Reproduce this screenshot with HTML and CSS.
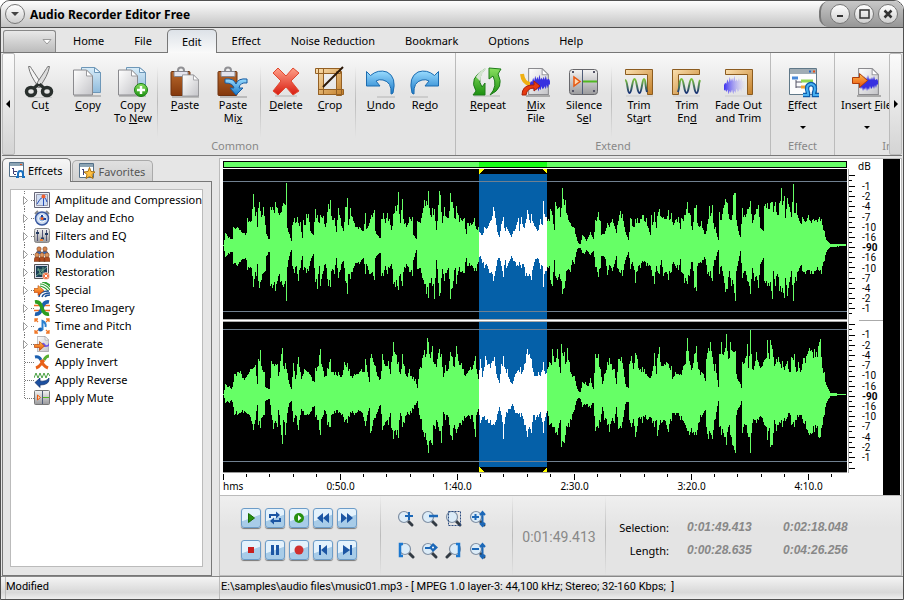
FILE: index.html
```html
<!DOCTYPE html>
<html lang="en">
<head>
    <meta charset="UTF-8">
    <meta name="viewport" content="width=device-width, initial-scale=1.0">
    <title>Audio Recorder Editor Free</title>
    <link rel="stylesheet" href="styles.css">
</head>

<body>
    <svg class="defs" aria-hidden="true">
        <defs>
            <linearGradient id="gPage" x1="0" y1="0" x2="1" y2="1"><stop offset="0" stop-color="#fff"/><stop offset="1" stop-color="#c4c4c8"/></linearGradient>
            <linearGradient id="gSky" x1="0" y1="0" x2="0" y2="1"><stop offset="0" stop-color="#d8ecf8"/><stop offset="1" stop-color="#8fbbdc"/></linearGradient>
            <linearGradient id="gBlue" x1="0" y1="0" x2="0" y2="1"><stop offset="0" stop-color="#9adcff"/><stop offset="1" stop-color="#1878c8"/></linearGradient>
            <linearGradient id="gWood" x1="0" y1="0" x2="1" y2="1"><stop offset="0" stop-color="#fbe0b0"/><stop offset="1" stop-color="#c47f28"/></linearGradient>
            <linearGradient id="gClip" x1="0" y1="0" x2="0" y2="1"><stop offset="0" stop-color="#b8682c"/><stop offset="1" stop-color="#84380c"/></linearGradient>
            <linearGradient id="gRed" x1="0" y1="0" x2="0" y2="1"><stop offset="0" stop-color="#ffa088"/><stop offset="1" stop-color="#d81c10"/></linearGradient>
            <linearGradient id="gGreen" x1="0" y1="0" x2="0" y2="1"><stop offset="0" stop-color="#8ae060"/><stop offset="1" stop-color="#1c9010"/></linearGradient>
            <linearGradient id="gSteel" x1="0" y1="0" x2="0" y2="1"><stop offset="0" stop-color="#f4f4f4"/><stop offset="1" stop-color="#9a9a9c"/></linearGradient>
            <linearGradient id="gWave" x1="0" y1="0" x2="0" y2="1"><stop offset="0" stop-color="#7cc43c"/><stop offset="1" stop-color="#183078"/></linearGradient>
            <linearGradient id="gFade" x1="0" y1="0" x2="1" y2="0"><stop offset="0" stop-color="#3c30f0"/><stop offset="1" stop-color="#b8b0ff" stop-opacity="0"/></linearGradient>
            <linearGradient id="gOrange" x1="0" y1="0" x2="0" y2="1"><stop offset="0" stop-color="#ffc050"/><stop offset="1" stop-color="#e84c08"/></linearGradient>
        </defs>

        <!-- shared pieces -->
        <symbol id="p-sheet" viewBox="0 0 20 26"><path d="M.5.5h13l6 6v19H.5z" fill="url(#gPage)" stroke="#8a8a8e"/><path d="M13.500.500v6h6z" fill="#fff" stroke="#9a9a9e"/></symbol>
        <symbol id="p-clip" viewBox="0 0 24 30"><rect x="1" y="5" width="19" height="24" rx="1" fill="url(#gClip)" stroke="#6e3210"/><circle cx="11" cy="4" r="3" fill="none" stroke="#909094" stroke-width="2"/><rect x="4" y="5" width="14" height="5" rx="1" fill="#e4e4ee" stroke="#84848e"/></symbol>
        <symbol id="p-noise" viewBox="0 0 20 16"><path d="M0 8l1-2 1 1 1-4 1 3 1-5 1 4 1-3 1 3 1-5 1 5 1-2 1 2 1-3 1 3 1-4 1 4 2-1 1 2v4l-1-1-1 4-1-3-1 4-1-3-1 2-1 1-1-3-1 4-1-2-1 3-1-4-1 3-1-2-1 3-1-4-1 2-1-2-1 1z"/></symbol>

        <!-- ribbon icons -->
        <symbol id="i-cut" viewBox="0 0 32 32">
            <path d="M4 31.500h24" stroke="#ccc"/>
            <path d="M4.500.500q2-1 3 2L19 20l-4 1.500Q6 10 4.500.500z" fill="#f4f4f4" stroke="#777"/><path d="M25.500.500q-2-1-3 2L11 20l4 1.500Q24 10 25.500.500z" fill="#dcdcdc" stroke="#777"/>
            <ellipse cx="7" cy="25.500" rx="4.500" ry="4" fill="none" stroke="#2a302e" stroke-width="3.500"/><ellipse cx="23" cy="25.500" rx="4.500" ry="4" fill="none" stroke="#2a302e" stroke-width="3.500"/>
            <path d="M10 22l5-4 5 4" fill="none" stroke="#2a302e" stroke-width="3"/><circle cx="15" cy="17" r="1" fill="#fff"/>
        </symbol>
        <symbol id="i-copy" viewBox="0 0 32 32"><path d="M2 30h27" stroke="#bbb" stroke-width="2"/><path d="M9.500 1.500h13l6 5v20h-19z" fill="url(#gSky)" stroke="#6d97b8"/><path d="M22.500 1.500v5h6z" fill="#eef8ff" stroke="#6d97b8"/><use href="#p-sheet" x="1" y="3" width="20" height="27"/></symbol>
        <symbol id="i-copynew" viewBox="0 0 32 32"><use href="#i-copy" width="32" height="32"/><circle cx="24" cy="24" r="6.500" fill="url(#gGreen)" stroke="#178010"/><path d="M24 20v8M20 24h8" stroke="#fff" stroke-width="2.500"/></symbol>
        <symbol id="i-paste" viewBox="0 0 32 32"><path d="M3 31h27" stroke="#bbb" stroke-width="2"/><use href="#p-clip" x="1" y="0" width="24" height="31"/><use href="#p-sheet" x="13" y="8" width="17" height="23"/></symbol>
        <symbol id="i-pastemix" viewBox="0 0 32 32"><path d="M3 31h27" stroke="#bbb" stroke-width="2"/><use href="#p-clip" x="0" y="0" width="24" height="31"/><path d="M8 13q9-1 11 5 2-6 11-5v4q-7-1-8 5h4l-7 7-6-7h4q-1-5-9-5z" fill="url(#gBlue)" stroke="#155aa0"/></symbol>
        <symbol id="i-delete" viewBox="0 0 32 32"><path d="M5 30h22" stroke="#ccc" stroke-width="2"/><path d="M3 7l5-5 8 8 7-8 6 5-8 8 8 10-6 4-7-8-8 8-5-4 8-10z" fill="url(#gRed)" stroke="#e04830"/></symbol>
        <symbol id="i-crop" viewBox="0 0 32 32"><path d="M1.500 2.500h25v5h-25z M4.500 2.500h5v26h-5z M4.500 23.500h25v5h-25z M22.500 5.500h5v24h-5z" fill="url(#gWood)" stroke="#946024"/><path d="M9 21L29 1" stroke="#2c1808" stroke-width="2"/></symbol>
        <symbol id="i-undo" viewBox="0 0 32 32"><path d="M12 31h18" stroke="#ccc" stroke-width="2"/><path d="M1.500 5.500l4 4Q13 3 22 6q10 5 6 21-1 1-2 1 1-12-8-14-4-1-7 1l4 5H1.500z" fill="url(#gBlue)" stroke="#1c6cb0"/></symbol>
        <symbol id="i-redo" viewBox="0 0 32 32"><use href="#i-undo" width="32" height="32" transform="matrix(-1 0 0 1 31 0)"/></symbol>
        <symbol id="i-repeat" viewBox="0 0 32 32"><path d="M2 30h26" stroke="#ccc" stroke-width="2"/><path d="M13 3Q-4 12 4 25l-3 4h12V17l-3 4Q4 12 13 3z" fill="url(#gGreen)" stroke="#1e7c1a"/><path d="M18 29q15-7 8-21l3-5-12-1v11l4-3q5 10-3 19z" fill="url(#gGreen)" stroke="#1e7c1a"/><path d="M14 2Q7 5 4 11l4 4q1-7 6-12z" fill="#d4e4d0"/></symbol>
        <symbol id="i-mixfile" viewBox="0 0 32 32"><path d="M6 30h24" stroke="#aaa" stroke-width="2"/><use href="#p-sheet" x="8" y="2" width="21" height="27"/><use href="#p-noise" x="10" y="8" width="21" height="18" fill="#3830e0"/><path d="M2 8q1 9 8 10" fill="none" stroke="#f0b010" stroke-width="4"/><path d="M2 29q0-9 9-10h3v-4l6 5-6 5v-3q-7 0-8 7z" fill="#e83a10" stroke="#a82008"/></symbol>
        <symbol id="i-silence" viewBox="0 0 32 32"><rect x="1.500" y="3.500" width="28" height="25" rx="3" fill="url(#gSteel)" stroke="#68686c"/><path d="M14.500 4v24" stroke="#4e5c78"/><path d="M15 15.500h14" stroke="#50b820" stroke-width="2"/><path d="M6 11v9l6-4.500z" fill="#ffd8b0" stroke="#e85810" stroke-width="1.500"/><path d="M4 6h2M4 25h2M25 6h2M25 25h2" stroke="#556" stroke-width="2"/></symbol>
        <symbol id="i-trimstart" viewBox="0 0 32 32"><path d="M3 30h27" stroke="#ccc"/><path d="M2.500 3.500h27v25h-5v-20h-22z" fill="url(#gWood)" stroke="#8c5c20"/><path d="M2 14c3 0 2 13 4.500 13S9 13 11.500 13 14 27 16.500 27 19 13 21 13s1 8 3 13" fill="none" stroke="url(#gWave)" stroke-width="2"/></symbol>
        <symbol id="i-trimend" viewBox="0 0 32 32"><path d="M2 30h27" stroke="#ccc"/><path d="M1.500 3.500h27v5h-21v20h-6z" fill="url(#gWood)" stroke="#8c5c20"/><path d="M7 26c2-5 1-13 3.500-13S13 27 15.500 27 18 13 20.500 13 23 27 25.500 27 27 18 29 14" fill="none" stroke="url(#gWave)" stroke-width="2"/></symbol>
        <symbol id="i-fade" viewBox="0 0 32 32"><path d="M2 30h27" stroke="#ccc"/><path d="M2.500 3.500h27v25h-5v-20h-22z" fill="url(#gWood)" stroke="#8c5c20"/><use href="#p-noise" x="1" y="9" width="23" height="20" fill="url(#gFade)"/></symbol>
        <symbol id="i-effect" viewBox="0 0 32 32"><path d="M2.500 2.500h27v26h-27z" fill="#fdfdfd" stroke="#607888"/><path d="M3 3h26v5H3z" fill="#a0acb4"/><path d="M22 5.500h2" stroke="#2868c8" stroke-width="2"/><path d="M26 5.500h2" stroke="#e85018" stroke-width="2"/><path d="M5 12h6" stroke="#4888d8" stroke-width="3"/><path d="M9 14v8M9 16h6M9 21h6" stroke="#556" fill="none"/><path d="M14 15h12" stroke="#90d850" stroke-width="3"/><path d="M14 21h5" stroke="#f0a030" stroke-width="3"/><path d="M16 29h5v-2q-3-8 3-9 6 1 3 9v2h5" fill="none" stroke="#0c5cac" stroke-width="4.500"/><path d="M16 29h5v-2q-3-8 3-9 6 1 3 9v2h5" fill="none" stroke="#48b0f0" stroke-width="2"/></symbol>
        <symbol id="i-insert" viewBox="0 0 32 32"><path d="M6 30h24" stroke="#aaa" stroke-width="2"/><use href="#p-sheet" x="7" y="2" width="21" height="27"/><use href="#p-noise" x="8" y="8" width="20" height="18" fill="#3830e0"/><path d="M1.500 11.500h7v-4l8 7-8 7v-4h-7z" fill="url(#gOrange)" stroke="#b03c08"/></symbol>

        <!-- 16px icons -->
        <symbol id="s-fx" viewBox="0 0 16 16"><path d="M.5.5h14v14H.5z" fill="#fff" stroke="#547088"/><path d="M1 1h13v3H1z" fill="#8ca4b4"/><path d="M11 2.500h2" stroke="#e85018"/><path d="M3 6.500h2M4.500 7v5M5 9.500h3M5 12.500h2" stroke="#447" fill="none"/><path d="M7 15h2v-3q0-3 2.500-3t2.500 3v3h2" fill="none" stroke="#1870c0" stroke-width="2"/></symbol>
        <symbol id="s-fav" viewBox="0 0 16 16"><path d="M.5.5h14v14H.5z" fill="#fff" stroke="#547088"/><path d="M1 1h13v3H1z" fill="#8ca4b4"/><path d="M3 6.500h2M4.500 7v5M5 9.500h3" stroke="#447" fill="none"/><path d="M10.500 4.500l1.500 4 4 .5-3 2.500 1 4-3.500-2-3.500 2 1-4-3-2.500 4-.5z" fill="#ffc040" stroke="#a87010"/></symbol>
        <symbol id="s-amp" viewBox="0 0 16 16"><path d="M.5.5h15v15H.5z" fill="#eef2fa" stroke="#667"/><path d="M2.500 2.500h11v11h-11z" fill="#cfdcf2" stroke="#99a"/><path d="M3 12q3-6 6-7 3 0 4 5" fill="none" stroke="#2850b8"/><path d="M9.500 5v9" stroke="#2850b8"/><circle cx="9.500" cy="4.500" r="2" fill="#f06030"/></symbol>
        <symbol id="s-delay" viewBox="0 0 16 16"><path d="M1 4l3-3M15 4l-3-3" stroke="#888" stroke-width="2"/><circle cx="8" cy="8.500" r="6.500" fill="#c8d8ee" stroke="#3858a0" stroke-width="1.500"/><circle cx="8" cy="8.500" r="3.500" fill="#90b4e0" stroke="#fff"/><path d="M8 5v4h4" fill="none" stroke="#1840a0" stroke-width="2"/><circle cx="8" cy="8.500" r="1.500" fill="#f06020"/></symbol>
        <symbol id="s-filter" viewBox="0 0 16 16"><rect x=".5" y=".5" width="15" height="14" rx="2" fill="url(#gSteel)" stroke="#888"/><path d="M3.500 2v11M8.500 2v11M12.500 2v11" stroke="#557"/><path d="M2 5h3M7 10.500h3M11 6h3" stroke="#223a60" stroke-width="2"/><path d="M6 12h3" stroke="#f08030" stroke-width="2"/></symbol>
        <symbol id="s-mod" viewBox="0 0 16 16"><g stroke="#6c3414" stroke-width=".5"><path d="M2 8q0-3 3-3t3 3M8 8q0-3 3-3t3 3" fill="#3c6cb8"/><circle cx="5" cy="3" r="2.200" fill="#d88850"/><circle cx="11" cy="3" r="2.200" fill="#d88850"/><path d="M0 15.500q0-5 3-5t3 5zM5 15.500q0-5 3-5t3 5zM10 15.500q0-5 3-5t3 5z" fill="#b04c20"/><circle cx="3" cy="9" r="2.200" fill="#e09860"/><circle cx="8" cy="9" r="2.200" fill="#e09860"/><circle cx="13" cy="9" r="2.200" fill="#e09860"/></g></symbol>
        <symbol id="s-rest" viewBox="0 0 16 16"><path d="M.5.5h14v14H.5z" fill="#dde" stroke="#555"/><path d="M2 2h11v11H2z" fill="#1c4058"/><path d="M2 12L13 3M3 6h6M5 10h6M4 4l3 7M9 3v8" stroke="#78b890" stroke-width=".8"/><circle cx="12" cy="12" r="3.500" fill="#f07040" stroke="#fff" stroke-width=".5"/><path d="M10.500 10.500l3 3M13.500 10.500l-3 3" stroke="#fff"/></symbol>
        <symbol id="s-spec" viewBox="0 0 16 16"><path d="M6 2q6 0 10 6M8 0q5 1 8 5M6 4q5 1 8 5M11 0l5 3" fill="none" stroke="#30a030" stroke-width="1.200"/><path d="M5 15q0-6 10-6M8 15q1-4 8-4M11 15q1-2 5-2" fill="none" stroke="#1c5098" stroke-width="1.400"/><path d="M0 6.500h4v-3l6 5-6 5v-3H0z" fill="url(#gOrange)" stroke="#b84408" stroke-width=".6"/></symbol>
        <symbol id="s-stereo" viewBox="0 0 16 16"><path d="M0 5.500h16M0 10.500h16" stroke="#f07028" stroke-width="1.500"/><path d="M1 14q5 1 7-6t7-6" fill="none" stroke="#1c60b0" stroke-width="3.500"/><path d="M1 2q5-1 7 6t7 6" fill="none" stroke="#2c9c20" stroke-width="3.500"/></symbol>
        <symbol id="s-time" viewBox="0 0 16 16"><path d="M1 4V1h3M12 1h3v3M1 12v3h3M12 15h3v-3M1 1l3 3M15 1l-3 3M1 15l3-3M15 15l-3-3" fill="none" stroke="#f07828" stroke-width="1.300"/><ellipse cx="6.500" cy="11.500" rx="2.500" ry="2" fill="#1860b0"/><path d="M8.500 12V3q4 2 3 6" fill="none" stroke="#2c80d0" stroke-width="2"/></symbol>
        <symbol id="s-gen" viewBox="0 0 16 16"><use href="#p-sheet" x="3" y="0" width="12" height="16"/><path d="M7 9q2-4 4-1t4-1v3q-3 2-8 0z" fill="#7058e8"/><path d="M.5 8.500h5v-3l5 4.500-5 4.500v-3h-5z" fill="url(#gOrange)" stroke="#b84408" stroke-width=".7"/></symbol>
        <symbol id="s-inv" viewBox="0 0 16 16"><path d="M1 3q4-1 6 3" fill="none" stroke="#1c60b0" stroke-width="3"/><path d="M10 6q2-4 5-4" fill="none" stroke="#58b030" stroke-width="3"/><path d="M2 14q3-1 5-4t3-4M7 6q2 6 7 8" fill="none" stroke="#e86018" stroke-width="3"/></symbol>
        <symbol id="s-rev" viewBox="0 0 16 16"><path d="M0 6l2-5 2 5 2-5 2 5 2-5 2 5 2-5 2 3" fill="none" stroke="#48a040"/><path d="M1 10.500L6 6v3q6 1 9-3 1 7-9 7v2.500z" fill="#1c50a0" stroke="#0c2c68" stroke-width=".7"/></symbol>
        <symbol id="s-mute" viewBox="0 0 16 16"><rect x=".5" y=".5" width="15" height="14" rx="1" fill="url(#gSteel)" stroke="#777"/><path d="M8.500 1v13" stroke="#4e5c78"/><path d="M9 7.500h6" stroke="#50b820"/><path d="M3.500 5v5l3-2.500z" fill="#ffd8b0" stroke="#e85810"/></symbol>
        <symbol id="s-tip" viewBox="0 0 12 18"><path d="M1.500 5.500v8l4-4z" fill="#fff" stroke="#999"/><path d="M2.500 0v4M2.500 15v3M9 9.500h3" stroke="#777" stroke-dasharray="1 1"/></symbol>
        <symbol id="s-leaf" viewBox="0 0 12 18"><path d="M2.500 0v18M3 9.500h9" stroke="#777" stroke-dasharray="1 1"/></symbol>
        <symbol id="s-last" viewBox="0 0 12 18"><path d="M2.500 0v9M3 9.500h9" stroke="#777" stroke-dasharray="1 1"/></symbol>

        <!-- transport -->
        <symbol id="t-play" viewBox="0 0 18 18"><path d="M6.500 4.500l6 4.500-6 4.500z" fill="#289010" stroke="#1c6c08"/></symbol>
        <symbol id="t-loop" viewBox="0 0 18 18"><path d="M4 9V6h7M14 9v3H7" fill="none" stroke="#1c56a4" stroke-width="2"/><path d="M10 2.500v7L14 6zM8 8.500v7L4 12z" fill="#1c56a4"/></symbol>
        <symbol id="t-once" viewBox="0 0 18 18"><circle cx="9" cy="9" r="5" fill="#289010"/><path d="M8 6l3.500 3L8 12z" fill="#fff"/></symbol>
        <symbol id="t-rew" viewBox="0 0 18 18"><path d="M9 4v10L3 9zM15 4v10L9 9z" fill="#1c56a4"/></symbol>
        <symbol id="t-fwd" viewBox="0 0 18 18"><path d="M3 4v10l6-5zM9 4v10l6-5z" fill="#1c56a4"/></symbol>
        <symbol id="t-stop" viewBox="0 0 18 18"><path d="M6 6h6v6H6z" fill="#c82020"/></symbol>
        <symbol id="t-pause" viewBox="0 0 18 18"><path d="M5 4h3v10H5zM10 4h3v10h-3z" fill="#1c56a4"/></symbol>
        <symbol id="t-rec" viewBox="0 0 18 18"><circle cx="9" cy="9" r="4.500" fill="#d03030"/></symbol>
        <symbol id="t-first" viewBox="0 0 18 18"><path d="M5 4h2v10H5zM13 4v10L7 9z" fill="#1c56a4"/></symbol>
        <symbol id="t-last" viewBox="0 0 18 18"><path d="M12 4h2v10h-2zM5 4v10l7-5z" fill="#1c56a4"/></symbol>

        <!-- zoom -->
        <symbol id="z-lens" viewBox="0 0 18 18"><path d="M11 11l4 4" stroke="#333b44" stroke-width="3" stroke-linecap="round"/><circle cx="7" cy="7" r="5.500" fill="#dcecf8" stroke="#8090a4" stroke-width="1.200"/></symbol>
        <symbol id="z-in" viewBox="0 0 18 18"><use href="#z-lens" width="18" height="18"/><path d="M12 2v8M8 6h8" stroke="#1c68b8" stroke-width="2"/></symbol>
        <symbol id="z-out" viewBox="0 0 18 18"><use href="#z-lens" width="18" height="18"/><path d="M8 6h9" stroke="#1c68b8" stroke-width="2.500"/></symbol>
        <symbol id="z-sel" viewBox="0 0 18 18"><use href="#z-lens" width="18" height="18"/><path d="M3.500 1.500h12v14h-12z" fill="none" stroke="#2c4c80" stroke-dasharray="2 1"/></symbol>
        <symbol id="z-vin" viewBox="0 0 18 18"><use href="#z-lens" width="18" height="18"/><path d="M3 7h7M6.500 4v6M13.500 3v11M11 5l2.500-3L16 5M11 13l2.500 3 2.500-3" fill="none" stroke="#1c68b8" stroke-width="2"/></symbol>
        <symbol id="z-vout" viewBox="0 0 18 18"><use href="#z-lens" width="18" height="18"/><path d="M3 7h7M13.500 3v11M11 5l2.500-3L16 5M11 13l2.500 3 2.500-3" fill="none" stroke="#1c68b8" stroke-width="2"/></symbol>
        <symbol id="z-left" viewBox="0 0 18 18"><use href="#z-lens" x="1" width="18" height="18"/><path d="M6 2H3v12h3" fill="none" stroke="#1c78d0" stroke-width="2.500"/></symbol>
        <symbol id="z-right" viewBox="0 0 18 18"><use href="#z-lens" width="18" height="18" transform="matrix(-1 0 0 1 17 0)"/><path d="M11 2h3v12h-3" fill="none" stroke="#1c78d0" stroke-width="2.500"/></symbol>
        <symbol id="z-full" viewBox="0 0 18 18"><use href="#z-lens" width="18" height="18"/><path d="M4 6h5" stroke="#1c68b8" stroke-width="2"/><path d="M12 1l5 4.500-5 4.500-4-4.500z" fill="#1c68b8"/><circle cx="12" cy="5.500" r="1" fill="#fff"/></symbol>
    </svg>

    <div class="window">
        <header class="title-bar">
            <button type="button" class="round" aria-label="Quick access"><svg viewBox="0 0 18 18"><path d="M5 7h8l-4 4z" fill="#444"/></svg></button>
            <h1>Audio Recorder Editor Free</h1>
            <div class="window-buttons">
                <button type="button" class="round" aria-label="Minimize"><svg viewBox="0 0 18 18"><path d="M6 11h6" stroke="#333" stroke-width="2"/></svg></button>
                <button type="button" class="round" aria-label="Maximize"><svg viewBox="0 0 18 18"><path d="M5 5h9v8H5z" fill="none" stroke="#333" stroke-width="1.500"/></svg></button>
                <button type="button" class="round" aria-label="Close"><svg viewBox="0 0 18 18"><path d="M5.500 5.500l7 7M12.500 5.500l-7 7" stroke="#333" stroke-width="2.500"/></svg></button>
            </div>
        </header>

        <nav class="menu">
            <button type="button" class="app-button" aria-label="Application menu"><svg width="10" height="6" viewBox="0 0 10 6"><path d="M1 .5h8L5 5z" fill="#fff" stroke="#999"/></svg></button>
            <button type="button">Home</button>
            <button type="button">File</button>
            <button type="button" class="current">Edit</button>
            <button type="button">Effect</button>
            <button type="button">Noise Reduction</button>
            <button type="button">Bookmark</button>
            <button type="button">Options</button>
            <button type="button">Help</button>
        </nav>

        <div class="ribbon">
            <button type="button" class="scroll" aria-label="Scroll left"><svg width="5" height="8" viewBox="0 0 5 8"><path d="M4 0v8L0 4z"/></svg></button>
            <div class="groups">
                <section class="group common">
                    <div class="tools">
                        <button type="button" class="tool wide"><svg><use href="#i-cut"/></svg><span>Cu<u>t</u></span></button>
                        <button type="button" class="tool wide"><svg><use href="#i-copy"/></svg><span><u>C</u>opy</span></button>
                        <button type="button" class="tool narrow"><svg><use href="#i-copynew"/></svg><span>Copy<br>To <u>N</u>ew</span></button>
                        <i class="rule"></i>
                        <button type="button" class="tool wide"><svg><use href="#i-paste"/></svg><span><u>P</u>aste</span></button>
                        <button type="button" class="tool wide"><svg><use href="#i-pastemix"/></svg><span>Paste<br>Mi<u>x</u></span></button>
                        <i class="rule"></i>
                        <button type="button" class="tool"><svg><use href="#i-delete"/></svg><span><u>D</u>elete</span></button>
                        <button type="button" class="tool"><svg><use href="#i-crop"/></svg><span><u>C</u>rop</span></button>
                        <i class="rule"></i>
                        <button type="button" class="tool"><svg><use href="#i-undo"/></svg><span><u>U</u>ndo</span></button>
                        <button type="button" class="tool"><svg><use href="#i-redo"/></svg><span>Re<u>d</u>o</span></button>
                    </div>
                    <h2>Common</h2>
                </section>
                <section class="group extend">
                    <div class="tools">
                        <button type="button" class="tool wide"><svg><use href="#i-repeat"/></svg><span><u>R</u>epeat</span></button>
                        <button type="button" class="tool wide"><svg><use href="#i-mixfile"/></svg><span><u>M</u>ix<br>File</span></button>
                        <button type="button" class="tool wide"><svg><use href="#i-silence"/></svg><span>Silence<br>S<u>e</u>l</span></button>
                        <i class="rule"></i>
                        <button type="button" class="tool wide"><svg><use href="#i-trimstart"/></svg><span>Trim<br>St<u>a</u>rt</span></button>
                        <button type="button" class="tool wide"><svg><use href="#i-trimend"/></svg><span>Trim<br>En<u>d</u></span></button>
                        <button type="button" class="tool wider"><svg><use href="#i-fade"/></svg><span>Fade Out<br>and Trim</span></button>
                    </div>
                    <h2>Extend</h2>
                </section>
                <section class="group effect">
                    <div class="tools">
                        <button type="button" class="tool wider"><svg><use href="#i-effect"/></svg><span><u>E</u>ffect</span><b class="drop"></b></button>
                    </div>
                    <h2>Effect</h2>
                </section>
                <section class="group insert">
                    <div class="tools">
                        <button type="button" class="tool wider"><svg><use href="#i-insert"/></svg><span>Insert <u>F</u>ile</span><b class="drop"></b></button>
                    </div>
                    <h2>Insert</h2>
                </section>
            </div>
            <button type="button" class="scroll" aria-label="Scroll right"><svg width="5" height="8" viewBox="0 0 5 8"><path d="M1 0v8l4-4z"/></svg></button>
        </div>

        <div class="workspace">
            <aside class="side">
                <div class="side-tabs">
                    <button type="button" class="current"><svg><use href="#s-fx"/></svg>Effcets</button>
                    <button type="button"><svg><use href="#s-fav"/></svg>Favorites</button>
                </div>
                <div class="side-body">
                    <ul class="tree">
                        <li><svg class="tip"><use href="#s-tip"/></svg><svg class="small"><use href="#s-amp"/></svg>Amplitude and Compression</li>
                        <li><svg class="tip"><use href="#s-tip"/></svg><svg class="small"><use href="#s-delay"/></svg>Delay and Echo</li>
                        <li><svg class="tip"><use href="#s-tip"/></svg><svg class="small"><use href="#s-filter"/></svg>Filters and EQ</li>
                        <li><svg class="tip"><use href="#s-tip"/></svg><svg class="small"><use href="#s-mod"/></svg>Modulation</li>
                        <li><svg class="tip"><use href="#s-tip"/></svg><svg class="small"><use href="#s-rest"/></svg>Restoration</li>
                        <li><svg class="tip"><use href="#s-tip"/></svg><svg class="small"><use href="#s-spec"/></svg>Special</li>
                        <li><svg class="tip"><use href="#s-tip"/></svg><svg class="small"><use href="#s-stereo"/></svg>Stereo Imagery</li>
                        <li><svg class="tip"><use href="#s-tip"/></svg><svg class="small"><use href="#s-time"/></svg>Time and Pitch</li>
                        <li><svg class="tip"><use href="#s-tip"/></svg><svg class="small"><use href="#s-gen"/></svg>Generate</li>
                        <li><svg class="tip"><use href="#s-leaf"/></svg><svg class="small"><use href="#s-inv"/></svg>Apply Invert</li>
                        <li><svg class="tip"><use href="#s-leaf"/></svg><svg class="small"><use href="#s-rev"/></svg>Apply Reverse</li>
                        <li><svg class="tip"><use href="#s-last"/></svg><svg class="small"><use href="#s-mute"/></svg>Apply Mute</li>
                    </ul>
                </div>
            </aside>

            <main class="main">
                <div class="editor">
                    <div class="overview"><span></span><span class="selected"></span><span></span></div>
                    <div class="unit">dB</div>
                    <svg class="wave" viewBox="0 0 624 303" preserveAspectRatio="none" role="img" aria-label="Waveform">
                        <defs><clipPath id="selection"><rect x="256" y="0" width="68" height="303"/></clipPath></defs>
                        <rect width="624" height="303" fill="#000"/>
                        <rect x="256" y="5" width="68" height="293" fill="#0560a8"/>
                        <path d="M256 0h5l-5 5zM324 0h-5l5 5zM256 303h5l-5-5zM324 303h-5l5-5z" fill="#ff0"/>
                        <path id="wave" fill="#66ff66"/>
                        <path id="waveSelected" fill="#fff" clip-path="url(#selection)"/>
                        <path d="M0 12.500h624M0 142.500h624M0 160.500h624M0 292.500h624" stroke="#708090"/>
                        <path d="M0 151.500h624" stroke="#aaa" stroke-width="3"/>
                        <path d="M0 151.500h624" stroke="#fff"/>
                    </svg>
                    <div class="levels">
                        <svg class="ticks" viewBox="0 0 8 303" preserveAspectRatio="none"><path id="ticks" stroke="#000"/></svg>
                        <ol><li>-1</li><li>-2</li><li>-4</li><li>-7</li><li>-10</li><li>-16</li><li><b>-90</b></li><li>-16</li><li>-10</li><li>-7</li><li>-4</li><li>-2</li><li>-1</li></ol>
                        <ol><li>-1</li><li>-2</li><li>-4</li><li>-7</li><li>-10</li><li>-16</li><li><b>-90</b></li><li>-16</li><li>-10</li><li>-7</li><li>-4</li><li>-2</li><li>-1</li></ol>
                    </div>
                    <div class="timeline">
                        <svg viewBox="0 0 660 7" preserveAspectRatio="none"><path id="marks" stroke="#000"/></svg>
                        <ol><li>hms</li><li>0:50.0</li><li>1:40.0</li><li>2:30.0</li><li>3:20.0</li><li>4:10.0</li></ol>
                    </div>
                    <div class="meter"></div>
                </div>

                <div class="controls">
                    <div class="transport">
                        <button type="button" aria-label="Play"><svg><use href="#t-play"/></svg></button>
                        <button type="button" aria-label="Loop"><svg><use href="#t-loop"/></svg></button>
                        <button type="button" aria-label="Play once"><svg><use href="#t-once"/></svg></button>
                        <button type="button" aria-label="Rewind"><svg><use href="#t-rew"/></svg></button>
                        <button type="button" aria-label="Forward"><svg><use href="#t-fwd"/></svg></button>
                        <button type="button" aria-label="Stop"><svg><use href="#t-stop"/></svg></button>
                        <button type="button" aria-label="Pause"><svg><use href="#t-pause"/></svg></button>
                        <button type="button" aria-label="Record"><svg><use href="#t-rec"/></svg></button>
                        <button type="button" aria-label="Go to start"><svg><use href="#t-first"/></svg></button>
                        <button type="button" aria-label="Go to end"><svg><use href="#t-last"/></svg></button>
                    </div>
                    <div class="zooms">
                        <button type="button" aria-label="Zoom in"><svg><use href="#z-in"/></svg></button>
                        <button type="button" aria-label="Zoom out"><svg><use href="#z-out"/></svg></button>
                        <button type="button" aria-label="Zoom selection"><svg><use href="#z-sel"/></svg></button>
                        <button type="button" aria-label="Zoom in vertically"><svg><use href="#z-vin"/></svg></button>
                        <button type="button" aria-label="Zoom to left edge"><svg><use href="#z-left"/></svg></button>
                        <button type="button" aria-label="Zoom full"><svg><use href="#z-full"/></svg></button>
                        <button type="button" aria-label="Zoom to right edge"><svg><use href="#z-right"/></svg></button>
                        <button type="button" aria-label="Zoom out vertically"><svg><use href="#z-vout"/></svg></button>
                    </div>
                    <div class="clock">0:01:49.413</div>
                    <dl class="range">
                        <dt>Selection:</dt><dd>0:01:49.413</dd><dd>0:02:18.048</dd>
                        <dt>Length:</dt><dd>0:00:28.635</dd><dd>0:04:26.256</dd>
                    </dl>
                </div>
            </main>
        </div>

        <footer class="status">
            <span class="state">Modified</span>
            <span class="file">E:\samples\audio files\music01.mp3 - [ MPEG 1.0 layer-3: 44,100 kHz; Stereo; 32-160 Kbps;&nbsp; ]</span>
        </footer>
    </div>

    <script src="wave.js"></script>
</body>
</html>
```

FILE: styles.css
```css
* {
    box-sizing: border-box;
}
body {
    margin: 0;
    font-family: "Noto Sans", "Open Sans", sans-serif;
    font-size: 11px;
    color: #000;
}
button {
    margin: 0;
    padding: 0;
    border: 0;
    background: none;
    font: inherit;
    color: inherit;
}
svg {
    display: block;
    flex: none;
}
h1, h2, ul, ol, dl, dd {
    margin: 0;
    padding: 0;
    list-style: none;
}
.defs {
    position: absolute;
    width: 0;
    height: 0;
}
.window {
    display: flex;
    flex-direction: column;
    min-height: 100vh;
    border: 1px solid #505050;
    border-radius: 10px 10px 0 0;
    background: #e6e6e6;
    overflow: hidden;
}

/* title bar */
.title-bar {
    display: flex;
    align-items: center;
    height: 27px;
    padding-left: 4px;
    border-bottom: 1px solid #505050;
    background: linear-gradient(#fdfdfd, #c4c4c4);
}
.title-bar h1 {
    flex: 1;
    margin-left: 5px;
    font-size: 12px;
    font-weight: 700;
}
.round {
    width: 20px;
    height: 20px;
    border: 1px solid #777;
    border-radius: 50%;
    background: linear-gradient(#fff, #cfcfcf);
}
.round svg {
    width: 18px;
    height: 18px;
}
.window-buttons {
    display: flex;
    align-items: center;
    gap: 4px;
    height: 26px;
    padding: 0 5px 0 9px;
    border-left: 2px solid #777;
    border-radius: 10px 0 0 10px;
    background: linear-gradient(#c8c8c8, #969696);
}

/* menu */
.menu {
    display: flex;
    align-items: flex-end;
    height: 25px;
    padding-left: 2px;
    border-bottom: 1px solid #777;
}
.menu button {
    height: 22px;
    padding: 0 15px;
    line-height: 22px;
}
.menu .app-button {
    display: flex;
    align-items: center;
    justify-content: flex-end;
    width: 53px;
    margin-right: 2px;
    padding: 0 3px;
    border: 1px solid #888;
    border-bottom: 0;
    border-radius: 3px 3px 0 0;
    background: linear-gradient(#e8e8e8, #bcbcbc);
}
.menu .current {
    height: 24px;
    margin-bottom: -1px;
    padding: 0 14px;
    border: 1px solid #777;
    border-bottom: 0;
    border-radius: 5px 5px 0 0;
    background: linear-gradient(#dde2e8, #fafafa);
    line-height: 20px;
}

/* ribbon */
.ribbon {
    display: flex;
    height: 103px;
    margin: 0 1px;
    border-bottom: 1px solid #777;
    background: linear-gradient(#f8f8f8, #e4e4e4 40%);
}
.scroll {
    display: flex;
    flex: none;
    align-items: center;
    justify-content: center;
    width: 13px;
    border: 1px solid #bbb;
    border-radius: 2px;
    background: linear-gradient(#fbfbfb, #d4d4d4);
}
.groups {
    display: flex;
    flex: 1;
    min-width: 0;
    overflow: hidden;
}
.group {
    display: flex;
    flex: none;
    flex-direction: column;
    border-right: 1px solid #bbb;
}
.common {
    width: 441px;
}
.common .tools {
    padding-left: 1px;
}
.extend {
    width: 315px;
}
.extend .tools {
    padding-left: 8px;
}
.effect {
    width: 64px;
}
.insert {
    width: 126px;
}
.tools {
    display: flex;
    flex: 1;
    padding-top: 13px;
}
.tool {
    display: flex;
    flex: none;
    flex-direction: column;
    align-items: center;
    width: 44px;
    line-height: 13px;
    white-space: nowrap;
}
.tool svg {
    width: 32px;
    height: 32px;
}
.tool.narrow {
    width: 42px;
}
.tool.wide {
    width: 48px;
}
.tool.wider {
    width: 55px;
}
.effect .tool,
.insert .tool {
    width: 63px;
}
.drop {
    margin-top: 15px;
    border: 3px solid transparent;
    border-top-color: #000;
    border-bottom: 0;
}
.rule {
    width: 1px;
    height: 72px;
    margin: 0 3px;
    background: linear-gradient(transparent, #bbb, transparent);
}
.group h2 {
    height: 17px;
    font-size: 11px;
    font-weight: 400;
    line-height: 16px;
    text-align: center;
    color: #888;
}

/* effects panel */
.workspace {
    display: flex;
    flex: 1;
    margin: 0 1px;
}
.side {
    display: flex;
    flex: none;
    flex-direction: column;
    width: 210px;
    margin-right: 7px;
    padding-top: 2px;
}
.side-tabs {
    display: flex;
    align-items: flex-end;
    gap: 1px;
}
.side-tabs button {
    display: flex;
    align-items: center;
    gap: 3px;
    height: 21px;
    padding: 0 7px 0 6px;
    border: 1px solid #aaa;
    border-bottom: 0;
    border-radius: 5px 5px 0 0;
    background: linear-gradient(#e0e0e0, #d0d0d0);
    color: #555;
}
.side-tabs .current {
    z-index: 1;
    height: 24px;
    margin-bottom: -1px;
    padding: 0 8px 1px 6px;
    border-color: #777;
    background: linear-gradient(#f6f6f6, #e6e6e6);
    color: #000;
}
.side-tabs svg,
.small {
    width: 16px;
    height: 16px;
}
.side-body {
    display: flex;
    flex: 1;
    padding: 7px 8px 8px 7px;
    border: 1px solid #777;
}
.tree {
    flex: 1;
    padding: 1px 0 0 11px;
    border: 1px solid #bbb;
    background: #fff;
}
.tree li {
    display: flex;
    align-items: center;
    height: 18px;
    line-height: 18px;
    white-space: nowrap;
}
.tip {
    width: 12px;
    height: 18px;
}
.small {
    margin-right: 5px;
}

/* waveform */
.main {
    display: flex;
    flex: 1;
    flex-direction: column;
    min-width: 0;
    padding-top: 2px;
}
.editor {
    display: grid;
    flex: 1;
    grid-template-columns: 1fr 36px 17px;
    grid-template-rows: 8px 1fr 22px;
    padding: 2px 1px 0 3px;
    border: 1px solid #bbb;
    background: #fff;
}
.overview {
    display: grid;
    grid-template-columns: 256fr 68fr 300fr;
    height: 7px;
    border: 1px solid #000;
    background: #66ff66;
}
.selected {
    background: #18ff18;
}
.unit {
    padding-left: 11px;
    font-size: 10px;
    line-height: 10px;
}
.wave {
    width: 100%;
    height: 100%;
    border-bottom: 1px solid #999;
    shape-rendering: crispEdges;
}
.levels {
    display: grid;
    grid-template-columns: 10px 1fr;
    grid-template-rows: 151fr 152fr;
    margin-left: 1px;
    border-left: 1px solid #aaa;
}
.ticks {
    grid-row: 1 / 3;
    width: 8px;
    height: 100%;
    shape-rendering: crispEdges;
}
.levels ol {
    display: flex;
    grid-column: 2;
    flex-direction: column;
    justify-content: space-between;
    padding: 13px 0 6px 3px;
    font-family: Roboto, sans-serif;
    font-size: 10px;
    line-height: 10px;
}
.levels ol + ol {
    padding: 9px 0 10px 3px;
    border-top: 1px solid #aaa;
}
.meter {
    grid-column: 3;
    grid-row: 1 / 4;
    margin-top: -2px;
    background: #000;
}
.timeline {
    grid-column: 1 / 3;
}
.timeline svg {
    width: 100%;
    height: 7px;
    shape-rendering: crispEdges;
}
.timeline ol {
    display: grid;
    grid-template-columns: 59fr repeat(5, 117fr) 16fr;
    font-size: 10px;
    line-height: 13px;
    text-align: center;
}
.timeline li:first-child {
    text-align: left;
}

/* bottom controls */
.controls {
    display: flex;
    height: 80px;
    border: 1px solid #bbb;
    border-top: 0;
    background: linear-gradient(#efefef, #e4e4e4 40%);
}
.transport {
    display: grid;
    grid-template-columns: repeat(5, 20px);
    align-content: center;
    gap: 12px 4px;
    padding: 0 23px 4px 21px;
}
.transport button {
    height: 20px;
    border: 1px solid #6c9cc8;
    border-radius: 3px;
    background: linear-gradient(160deg, #e4f2fc 48%, #a8cce8 52%);
    box-shadow: 0 1px 1px #777;
}
.transport svg {
    width: 18px;
    height: 18px;
}
.zooms {
    display: grid;
    grid-template-columns: repeat(4, 18px);
    align-content: center;
    gap: 14px 6px;
    padding: 0 25px 2px 16px;
}
.zooms svg {
    width: 18px;
    height: 18px;
}
.zooms,
.clock,
.range {
    border-left: 1px solid;
    border-image: linear-gradient(transparent, #bbb, transparent) 1;
}
.clock {
    display: flex;
    align-items: center;
    justify-content: center;
    width: 93px;
    padding-top: 2px;
    font-family: Roboto, sans-serif;
    font-size: 14px;
    color: #888;
}
.range {
    display: grid;
    grid-template-columns: 63px 96px 96px;
    grid-auto-rows: 23px;
    align-content: center;
    padding-top: 7px;
    line-height: 23px;
}
.range dt {
    text-align: right;
}
.range dd {
    padding-left: 18px;
    font-family: "Liberation Sans", sans-serif;
    font-size: 12px;
    font-weight: 700;
    font-style: italic;
    color: #888;
}

/* status bar */
.status {
    display: flex;
    height: 23px;
    border-top: 1px solid #888;
    background: linear-gradient(#f4f4f4, #d8d8d8 70%, #eee);
    font-family: Roboto, sans-serif;
    line-height: 20px;
}
.state {
    width: 214px;
    margin-left: 4px;
    border-left: 1px solid #bbb;
}
.file {
    padding-left: 1px;
    border-left: 1px solid #bbb;
}
```

FILE: wave.js
```js
// Peak tables: position, peak above, peak below.
// Positions are in thirds of a pixel, counted from the block's start.
const channels = [
    {
        middle: 76,
        blocks: [
            [-24, `24 0 0,31 12 11,36 9 9,42 8 8,52 6 6,55 18 18,66 18 20,75 15 16,84 12 13,94 12 14,97 27 24,104 24 22,110 24 22,115 51 41,118 38 33,124 33 30,127 18 18,131 37 35,134 43 42,139 28 34,146 38 27,150 20 25,153 11 10,162 6 6,166 38 40,172 38 42,177 32 36,181 43 45,186 37 35,192 30 28,196 32 36,206 42 41,211 40 35,214 62 55,217 17 21,224 11 10,229 4 4,233 20 20,238 27 27,243 23 20,247 28 28,251 22 35,256 23 22,262 7 10,266 25 24,270 20 22,275 31 27,280 31 25,287 14 15,296 10 8,301 36 36,307 30 43,312 22 20,316 30 40,325 29 25,332 18 18,341 41 40,345 45 41,350 29 25,357 27 28,363 13 12,370 37 32,377 27 24,385 14 15,391 38 35,397 47 48,400 20 28,406 37 33,412 28 26,424 18 17,434 18 18,445 14 12,451 32 28,455 16 18,462 22 28,470 30 27,479 35 34,482 14 12,495 7 7,499 26 30,505 32 30,511 22 20,518 32 28,524 26 22,529 15 18,535 31 38,541 39 41,547 40 40,551 53 44,555 22 28,562 46 40,566 26 26,578 20 20,583 28 26,592 28 30,596 10 14,604 6 4,608 24 23,616 22 22,622 32 32,628 45 38,634 44 48,641 54 52,645 30 32`],
            [621, `2 30 37,8 37 40,13 36 53,20 15 14,27 54 50,31 50 47,38 22 23,43 38 35,50 28 27,55 27 22,61 52 53,66 43 42,75 26 22,79 39 38,85 30 25,95 25 26,103 27 27,108 11 12,113 22 20,127 21 20,132 27 25,140 16 25,146 18 16,150 12 10,157 10 17,163 18 22,170 16 18,178 22 27,190 38 35,194 34 30,200 20 20,205 10 12,208 8 12,213 21 20,220 28 31,225 14 14,230 18 22,243 8 10,250 14 15,258 20 20,264 27 20,268 14 16,274 28 22,280 18 18,286 22 30,292 35 30,300 22 30,304 31 34,310 22 20,316 18 13,325 15 13,330 26 23,336 20 20,341 44 41,345 28 25,350 28 25,357 24 20,362 36 34,367 30 40,372 15 14,376 43 30,382 36 34,388 38 28,392 28 33,397 57 48,402 40 42,406 45 35,413 30 24,420 22 26,427 18 14,433 17 18,440 8 6,445 2 2,452 1 2,457 10 7,462 8 8,470 4 4,480 13 9,490 6 5,497 25 21,506 33 31,510 24 22,515 10 10,525 14 13,532 22 29,540 22 20,548 26 25,558 12 10,562 20 22,570 34 27,577 31 30,585 13 14,595 5 6,600 27 23,605 26 18,610 18 20,617 26 37,622 27 25,632 26 22,638 30 15,650 27 20,655 17 20`],
            [1281, `2 10 20,4 30 24,8 20 30,13 33 38,18 17 20,22 29 25,28 36 28,33 28 14,40 28 30,45 26 26,54 35 34,60 26 27,64 32 26,70 20 16,76 25 20,85 28 24,90 16 13,95 27 26,103 30 37,112 43 38,117 32 30,122 30 23,128 15 16,133 37 42,139 40 45,143 22 20,148 18 17,153 24 17,158 17 14,166 11 13,171 21 28,178 39 30,183 32 32,187 40 35,190 22 20,197 18 14,204 5 4,208 33 28,214 25 20,219 37 30,226 46 46,232 42 43,237 26 25,243 25 40,248 30 34,251 50 38,256 52 55,260 25 25,265 14 15,272 8 5,277 37 32,281 28 27,284 30 25,292 36 35,301 44 48,306 22 22,314 30 35,320 36 30,326 40 42,330 17 18,340 14 12,344 39 35,351 42 40,357 36 40,362 42 36,367 43 53,370 33 25,376 43 40,382 30 28,388 42 45,394 57 46,398 40 42,402 49 52,407 27 32,412 47 50,418 38 36,424 28 25,430 61 55,434 32 37,438 42 35,444 27 25,450 22 20,458 28 25,466 23 28,475 30 24,482 24 28,490 26 28,498 25 24,507 28 25,514 26 28,518 20 20,522 14 15,527 8 9,532 4 4,540 1 1,590 1 0`]
        ]
    },
    {
        middle: 225,
        blocks: [
            [-24, `24 0 0,31 10 8,36 7 6,42 8 8,50 5 5,55 12 12,58 20 20,66 22 20,75 23 18,85 16 18,93 17 18,105 25 22,115 26 35,122 29 25,127 10 10,131 35 30,137 44 33,141 24 22,147 22 20,152 7 6,163 5 4,168 33 20,174 30 34,180 30 26,187 30 32,190 18 15,197 33 30,202 46 49,206 28 25,212 31 40,217 21 18,224 10 8,230 5 6,235 31 27,242 15 20,249 37 35,255 22 20,260 15 14,268 25 20,280 22 20,290 17 16,298 12 11,302 26 22,308 27 25,317 45 40,320 30 24,325 23 20,332 18 16,337 26 30,345 35 32,350 22 20,360 22 18,370 22 18,380 17 20,388 32 27,398 31 28,402 25 22,410 18 18,418 20 20,433 22 16,440 25 17,447 22 26,451 35 31,456 22 20,462 12 13,465 36 38,470 40 36,475 32 25,482 28 23,488 18 17,495 15 10,502 40 35,507 30 30,515 28 26,520 33 30,527 20 18,530 32 33,535 52 44,540 40 35,544 39 40,550 32 43,555 20 18,562 40 32,568 28 28,575 18 20,582 25 20,588 18 18,594 17 14,600 15 10,606 6 6,612 25 20,617 27 24,622 36 35,628 44 42,633 40 45,638 56 50,641 52 58,647 36 45,651 48 50,655 32 30,662 30 34,668 35 27,673 45 36,680 40 48,686 17 17,692 29 25,700 25 22,706 42 40,712 37 45,718 27 30,725 48 38,730 33 32,738 31 30,745 25 26,752 18 23,760 23 20,766 27 24,772 25 20,780 38 42,785 25 20,790 15 14,797 35 28,802 17 22,811 38 25,820 30 28,830 31 30,838 37 30,844 20 25,852 11 12,860 30 20,866 38 44,870 25 22,878 25 18,885 12 14,892 10 9,900 20 18,908 23 18,915 27 22,920 20 18,927 30 30,933 40 36,938 45 42,944 40 32,950 35 38,955 22 20,962 18 25,970 22 22,977 18 17,984 32 38,990 20 22,996 25 16,1003 32 30,1010 29 28,1013 45 32,1020 32 38,1027 45 40`],
            [1011, `0 21 25,5 50 52,9 38 47,13 42 48,17 30 40,22 46 32,28 32 32,33 20 25,42 18 15,50 8 6,56 3 3,62 2 4,66 12 12,75 12 10,85 8 12,92 16 13,100 5 8,106 40 36,114 40 33,120 25 27,126 10 12,132 20 25,141 32 30,149 36 37,155 30 26,163 25 28,168 10 12,175 35 34,185 37 33,190 25 22,195 10 9,205 6 7,209 30 25,214 38 32,220 25 24,227 41 42,232 35 31,238 24 22,247 27 28,254 25 22,262 18 25,270 16 22,277 23 28,283 41 32,288 20 25,293 36 41,298 47 30,304 28 28,312 30 25,320 32 30,326 30 37,334 28 26,338 15 18,346 22 20,354 20 18,362 20 25,370 28 26,376 30 30,382 56 36,388 33 40,396 26 38,402 40 40,408 48 40,412 32 35,418 24 27,425 22 22,430 20 18,436 13 15,440 35 32,446 46 44,451 52 38,457 37 44,462 23 25,467 30 24,474 7 6,479 40 32,484 52 40,489 39 38,494 42 42,500 60 50,505 35 32,512 52 40,518 43 50,526 43 58,530 20 20,540 10 10,544 6 6,547 32 38,556 36 30,562 50 38,566 26 42,571 65 58,576 25 28,583 28 25,589 42 28,595 32 25,604 27 22,612 34 30,618 36 32,622 54 45,628 35 33,631 54 52,637 45 50,642 28 25,649 35 36,655 37 30,662 30 28,668 33 32,676 28 26,683 33 22,690 22 20,695 37 30,702 40 32,708 22 25,715 32 22,720 22 20,730 36 28,740 38 34,748 46 40,756 42 38,762 45 37,768 42 33,775 48 42,782 55 42,788 26 30,792 22 20,797 12 12,803 7 6,812 1 1,860 0 0`]
        ]
    }
];

function readPeaks(blocks) {
    return blocks.flatMap(([start, text]) => text.split(',').map(row => {
        const [x, up, down] = row.split(' ').map(Number);
        return { x: Math.floor((x + start) / 3), up, down };
    }));
}

// fixed seed, so the fine detail is always the same
let seed = 7;
function random() {
    seed = (seed * 16807) % 2147483647;
    return seed / 2147483647;
}

function drawChannel(channel) {
    const peaks = readPeaks(channel.blocks);
    let path = '';
    for (let i = 0; i < peaks.length - 1; i++) {
        const a = peaks[i];
        const b = peaks[i + 1];
        for (let x = a.x; x < b.x && x < 624; x++) {
            const t = (x - a.x) / (b.x - a.x);
            const rough = x === a.x ? 1 : 0.82 + random() * 0.2;
            const up = Math.round((a.up + (b.up - a.up) * t) * rough);
            const down = Math.round((a.down + (b.down - a.down) * t) * rough);
            path += `M${x} ${channel.middle - up}h1v${up + down + 1}h-1z`;
        }
    }
    return path;
}

const wave = channels.map(drawChannel).join('');
document.getElementById('wave').setAttribute('d', wave);
document.getElementById('waveSelected').setAttribute('d', wave);

// level ticks
const upper = [6, 17, 27, 37, 48, 58, 68, 78, 88, 98, 109, 119, 129, 139];
const lower = [154, 165, 175, 185, 196, 206, 216, 226, 236, 246, 256, 267, 277, 287, 298];
let ticks = '';
[...upper, ...lower].forEach(y => {
    ticks += `M0 ${y + 0.5}h6`;
    if (y < 298) ticks += `M0 ${y + 5.5}h3`;
});
document.getElementById('ticks').setAttribute('d', ticks);

// time marks, one every ten seconds
let marks = '';
for (let i = 0; i < 27; i++) {
    marks += `M${Math.floor(i * 23.4) + 0.5} 1v${i % 5 === 0 ? 6 : 3}`;
}
document.getElementById('marks').setAttribute('d', marks);
```
